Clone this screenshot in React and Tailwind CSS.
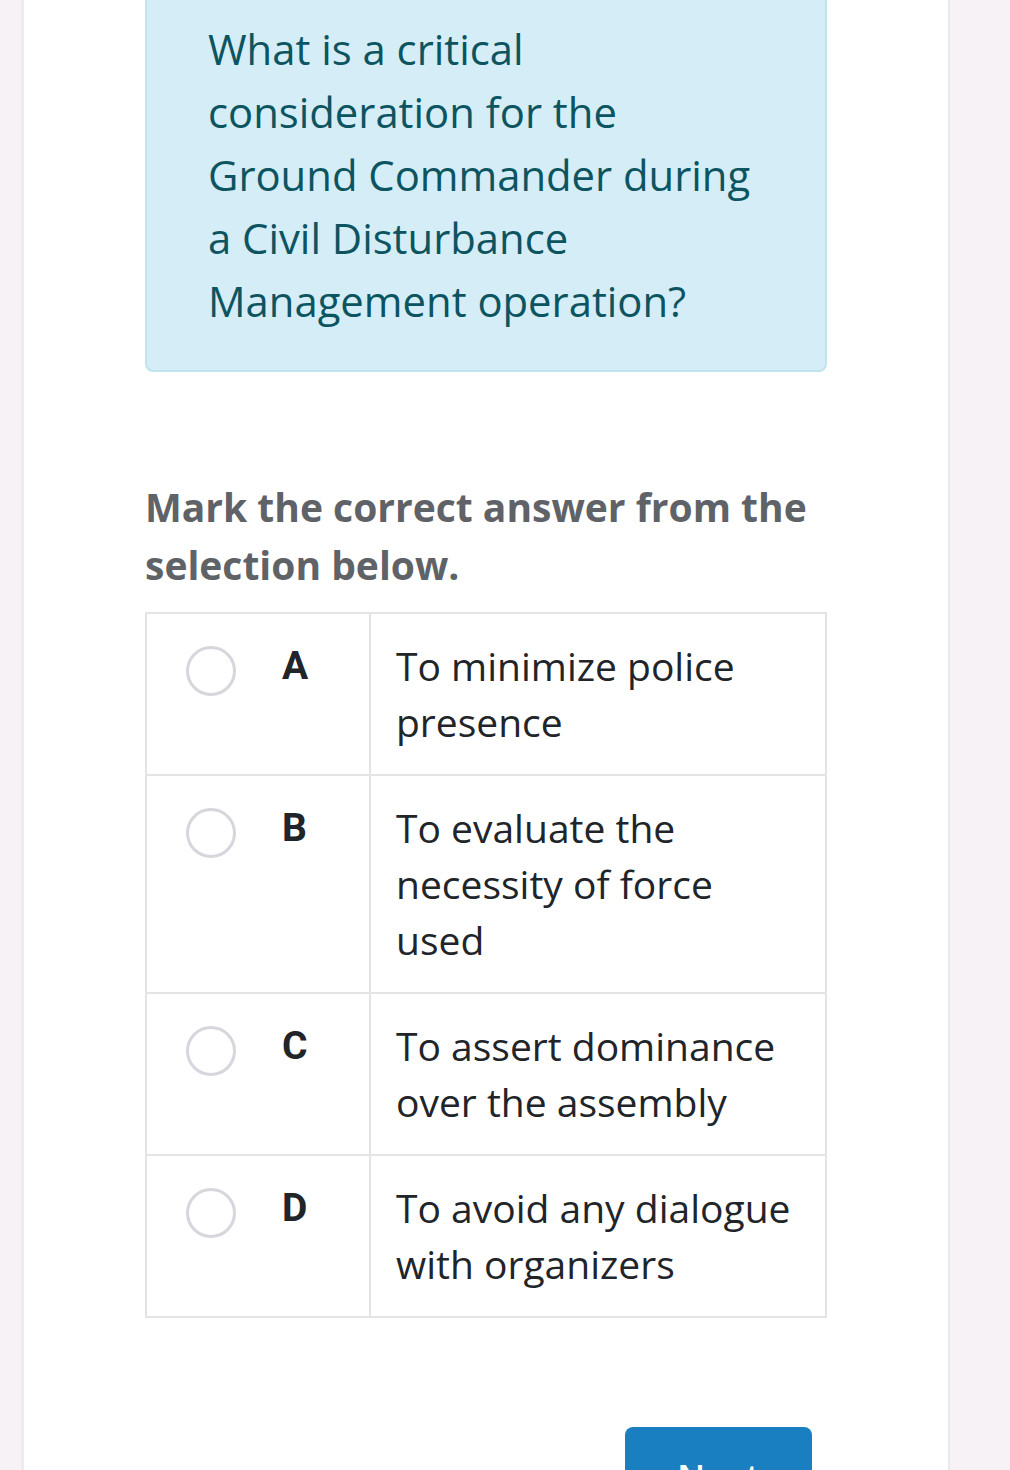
export default function App() {
  const options = [
    { key: "A", text: "To minimize police presence" },
    { key: "B", text: "To evaluate the necessity of force used" },
    { key: "C", text: "To assert dominance over the assembly" },
    { key: "D", text: "To avoid any dialogue with organizers" },
  ];
  return (
    <div className="min-h-screen w-full bg-[#f7f2f6] pl-[21px] pr-[60px]" style={{ fontFamily: '"Open Sans", sans-serif' }}>
      <div className="min-h-[1600px] w-[929px] bg-white border-l-[3px] border-l-[#eeeaee] border-r-[2px] border-r-[#ebe7ea] pl-[121px] pr-[121px] pb-[200px]">
        <div className="-mt-[40px] rounded-[8px] border-2 border-[#bfe4ec] bg-[#d4edf6] pl-[61px] pr-[60px] pt-[55px] pb-[38px] text-[41.8px] leading-[63px] text-[#0c5460]">
          What is a critical consideration for the Ground Commander during a Civil Disturbance Management operation?
        </div>
        <h2 className="mt-[106px] text-[39px] leading-[58px] font-bold text-[#5f6367] pr-[4px]">
          Mark the correct answer from the selection below.
        </h2>
        <div className="mt-[18px] border-2 border-[#e4e4e4]">
          {options.map((o, i) => (
            <div key={o.key} className={"flex " + (i > 0 ? "border-t-2 border-[#e4e4e4]" : "")}>
              <div className="w-[224px] shrink-0 flex items-start pl-[39px] pt-[32px] border-r-2 border-[#e4e4e4]">
                <div className="h-[50px] w-[50px] rounded-full border-[3px] border-[#d6d7dc] bg-white shrink-0" />
                <div className="ml-[46px] mt-[-8px] text-[39px] leading-[56px] font-bold text-[#212529]" style={{ fontFamily: 'Roboto, "Liberation Sans", sans-serif' }}>
                  {o.key}
                </div>
              </div>
              <div className="flex-1 pl-[25px] pr-[25px] py-[24px] text-[39px] leading-[56px] text-[#212529]">
                {o.text}
              </div>
            </div>
          ))}
        </div>
        <div className="mt-[109px] flex justify-end pr-[15px]">
          <button className="w-[187px] rounded-[8px] bg-[#1a7fc1] pt-[23px] pb-[17px] text-[36px] leading-[56px] font-semibold text-white">
            Next
          </button>
        </div>
      </div>
    </div>
  );
}
